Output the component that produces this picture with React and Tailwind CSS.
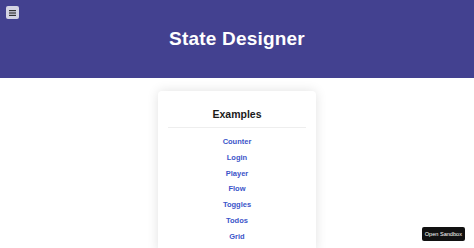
import React from 'react';

const EXAMPLES = ['Counter', 'Login', 'Player', 'Flow', 'Toggles', 'Todos', 'Grid'];

function App() {
  return (
    <div className="min-h-screen bg-white font-['Liberation_Sans',Arial,sans-serif]">
      {/* Header */}
      <header className="relative h-[78px] bg-[#434190] flex items-center justify-center">
        <button className="absolute left-[6px] top-[6px] w-[13px] h-[13px] rounded-[2px] bg-[#d4d4e4] flex items-center justify-center">
          <svg width="7" height="6" viewBox="0 0 7 6">
            <rect x="0" y="0" width="7" height="1.2" fill="#333" />
            <rect x="0" y="2.4" width="7" height="1.2" fill="#333" />
            <rect x="0" y="4.8" width="7" height="1.2" fill="#333" />
          </svg>
        </button>
        <h1 className="text-white text-[19px] font-bold tracking-[0.2px]">State Designer</h1>
      </header>

      {/* Examples card */}
      <div className="flex justify-center pt-[13px]">
        <div className="w-[158px] bg-white rounded-[4px] shadow-[0_0_12px_rgba(0,0,0,0.12)] px-[10px] pt-[16px] pb-[8px]">
          <h2 className="text-center text-[10.5px] font-bold text-[#1a1a1a] leading-[14px]">Examples</h2>
          <div className="mt-[6px] border-t border-[#eeeeee]" />
          <ul className="pt-[6px] flex flex-col">
            {EXAMPLES.map(name => (
              <li key={name} className="text-center text-[7.5px] leading-[15.8px]">
                <a href="#" className="font-bold text-[#3b55c9]">{name}</a>
              </li>
            ))}
          </ul>
        </div>
      </div>

      <button className="fixed right-[9px] bottom-[7px] h-[14px] px-[3px] bg-[#111111] rounded-[2px] text-white text-[5.6px] leading-[14px]">
        Open Sandbox
      </button>
    </div>
  );
}

export default App;
